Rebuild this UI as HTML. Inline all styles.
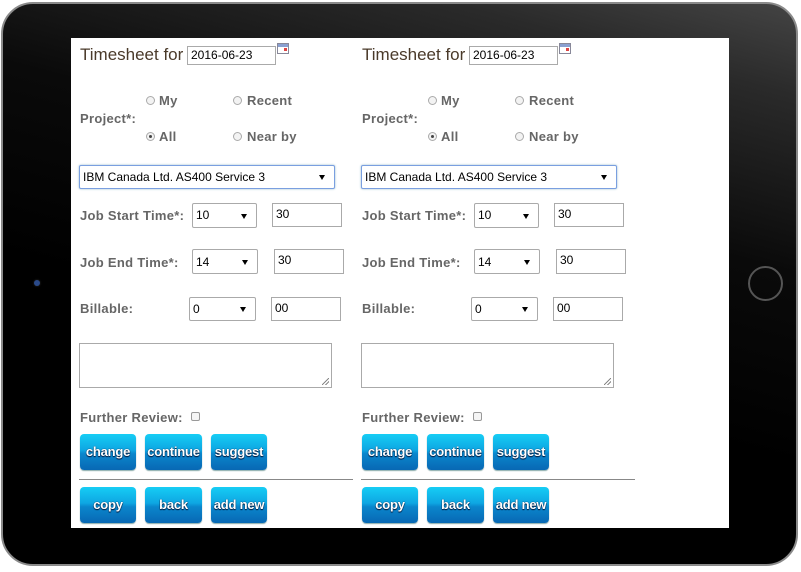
<!DOCTYPE html>
<html><head><meta charset="utf-8"><style>
*{margin:0;padding:0;box-sizing:border-box}
body{width:801px;height:572px;background:#fff;position:relative;overflow:hidden;font-family:"Liberation Sans",Arial,sans-serif}
.frame{position:absolute;left:1px;top:2px;width:797px;height:564px;border-radius:32px;border:2px solid #8a8a8a;background:linear-gradient(195deg,#444 0%,#2a2a2a 12%,#0a0a0a 35%,#000 60%,#000 100%)}
.screen{position:absolute;left:71px;top:38px;width:658px;height:490px;background:#fff}
.home{position:absolute;left:748px;top:266px;width:35px;height:35px;border-radius:50%;border:2px solid #555}
.cam{position:absolute;left:34px;top:280px;width:6px;height:6px;border-radius:50%;background:#2a4a8a;box-shadow:0 0 2px #333}
.col{position:absolute;top:0;left:0;width:300px;height:572px}
.a{position:absolute}
.t{font-size:17px;color:#4a3a2a}
.lbl{font-size:13px;font-weight:bold;color:#666;letter-spacing:.3px}
.inp{position:absolute;border:1px solid #aaa;background:#fff;font-size:12px;color:#000;padding-left:3px;line-height:20px}
.sel{position:absolute;border:1px solid #aaa;border-radius:2px;background:#fff;font-size:12px;color:#000;padding-left:3px}
.sel::after{content:"";position:absolute;right:9px;top:50%;margin-top:-2px;border-left:3px solid transparent;border-right:3px solid transparent;border-top:5px solid #000}
.rad{position:absolute;width:9px;height:9px;border-radius:50%;border:1px solid #aaa;background:#f3f3f3}
.rad.on::after{content:"";position:absolute;left:2px;top:2px;width:3px;height:3px;border-radius:50%;background:#444}
.btn{position:absolute;height:36px;border-radius:4px;background:linear-gradient(#16cdf5 0%,#0ea6e2 45%,#0a86cc 55%,#0868b4 100%);color:#fff;font-weight:bold;font-size:13px;text-align:center;line-height:35px;text-shadow:0 1px 1px #013,0 0 1px #013;box-shadow:0 1px 1px #8aa;white-space:nowrap;letter-spacing:-.2px}
.cal{position:absolute;width:12px;height:11px;border:1px solid #889;background:linear-gradient(#8aa0d0 0 3px,#fff 3px)}
.cal::after{content:"";position:absolute;right:1px;top:4px;width:3px;height:3px;background:#d44}
.grip{position:absolute;right:2px;bottom:2px;width:7px;height:7px;background:linear-gradient(135deg,transparent 45%,#888 45%,#888 55%,transparent 55%,transparent 70%,#888 70%,#888 80%,transparent 80%)}
</style></head><body>
<div class="frame"></div>
<div class="cam"></div>
<div class="home"></div>
<div class="screen"></div>

<div class="col" style="left:0">
<div class="a t" style="left:80px;top:45px">Timesheet for</div>
<div class="inp" style="left:187px;top:46px;width:89px;height:19px;line-height:17px">2016-06-23</div>
<div class="cal" style="left:277px;top:43px"></div>
<div class="rad" style="left:146px;top:96px"></div><div class="a lbl" style="left:159px;top:93px">My</div>
<div class="rad" style="left:233px;top:96px"></div><div class="a lbl" style="left:247px;top:93px">Recent</div>
<div class="a lbl" style="left:80px;top:111px">Project*:</div>
<div class="rad on" style="left:146px;top:132px"></div><div class="a lbl" style="left:159px;top:129px">All</div>
<div class="rad" style="left:233px;top:132px"></div><div class="a lbl" style="left:247px;top:129px">Near by</div>
<div class="sel" style="left:79px;top:165px;width:256px;height:24px;line-height:22px;border-color:#7a9fe0;box-shadow:0 0 2px #9bc">IBM Canada Ltd. AS400 Service 3</div>
<div class="a lbl" style="left:80px;top:208px">Job Start Time*:</div>
<div class="sel" style="left:192px;top:203px;width:65px;height:25px;line-height:23px">10</div>
<div class="inp" style="left:272px;top:203px;width:70px;height:24px">30</div>
<div class="a lbl" style="left:80px;top:255px">Job End Time*:</div>
<div class="sel" style="left:192px;top:249px;width:66px;height:25px;line-height:25px">14</div>
<div class="inp" style="left:274px;top:249px;width:70px;height:25px">30</div>
<div class="a lbl" style="left:80px;top:301px">Billable:</div>
<div class="sel" style="left:189px;top:297px;width:67px;height:24px;line-height:22px">0</div>
<div class="inp" style="left:271px;top:297px;width:70px;height:24px">00</div>
<div class="inp" style="left:79px;top:343px;width:253px;height:45px"><div class="grip"></div></div>
<div class="a lbl" style="left:80px;top:410px">Further Review:</div>
<div class="a" style="left:191px;top:412px;width:9px;height:9px;border:1px solid #999;border-radius:2px;background:#f5f5f5"></div>
<div class="btn" style="left:80px;top:434px;width:56px">change</div>
<div class="btn" style="left:145px;top:434px;width:57px">continue</div>
<div class="btn" style="left:211px;top:434px;width:56px">suggest</div>
<div class="a" style="left:79px;top:479px;width:274px;height:1px;background:#888"></div>
<div class="btn" style="left:80px;top:487px;width:56px">copy</div>
<div class="btn" style="left:145px;top:487px;width:57px">back</div>
<div class="btn" style="left:211px;top:487px;width:56px">add new</div>
</div>

<div class="col" style="left:282px">
<div class="a t" style="left:80px;top:45px">Timesheet for</div>
<div class="inp" style="left:187px;top:46px;width:89px;height:19px;line-height:17px">2016-06-23</div>
<div class="cal" style="left:277px;top:43px"></div>
<div class="rad" style="left:146px;top:96px"></div><div class="a lbl" style="left:159px;top:93px">My</div>
<div class="rad" style="left:233px;top:96px"></div><div class="a lbl" style="left:247px;top:93px">Recent</div>
<div class="a lbl" style="left:80px;top:111px">Project*:</div>
<div class="rad on" style="left:146px;top:132px"></div><div class="a lbl" style="left:159px;top:129px">All</div>
<div class="rad" style="left:233px;top:132px"></div><div class="a lbl" style="left:247px;top:129px">Near by</div>
<div class="sel" style="left:79px;top:165px;width:256px;height:24px;line-height:22px;border-color:#7a9fe0;box-shadow:0 0 2px #9bc">IBM Canada Ltd. AS400 Service 3</div>
<div class="a lbl" style="left:80px;top:208px">Job Start Time*:</div>
<div class="sel" style="left:192px;top:203px;width:65px;height:25px;line-height:23px">10</div>
<div class="inp" style="left:272px;top:203px;width:70px;height:24px">30</div>
<div class="a lbl" style="left:80px;top:255px">Job End Time*:</div>
<div class="sel" style="left:192px;top:249px;width:66px;height:25px;line-height:25px">14</div>
<div class="inp" style="left:274px;top:249px;width:70px;height:25px">30</div>
<div class="a lbl" style="left:80px;top:301px">Billable:</div>
<div class="sel" style="left:189px;top:297px;width:67px;height:24px;line-height:22px">0</div>
<div class="inp" style="left:271px;top:297px;width:70px;height:24px">00</div>
<div class="inp" style="left:79px;top:343px;width:253px;height:45px"><div class="grip"></div></div>
<div class="a lbl" style="left:80px;top:410px">Further Review:</div>
<div class="a" style="left:191px;top:412px;width:9px;height:9px;border:1px solid #999;border-radius:2px;background:#f5f5f5"></div>
<div class="btn" style="left:80px;top:434px;width:56px">change</div>
<div class="btn" style="left:145px;top:434px;width:57px">continue</div>
<div class="btn" style="left:211px;top:434px;width:56px">suggest</div>
<div class="a" style="left:79px;top:479px;width:274px;height:1px;background:#888"></div>
<div class="btn" style="left:80px;top:487px;width:56px">copy</div>
<div class="btn" style="left:145px;top:487px;width:57px">back</div>
<div class="btn" style="left:211px;top:487px;width:56px">add new</div>
</div>
</body></html>
